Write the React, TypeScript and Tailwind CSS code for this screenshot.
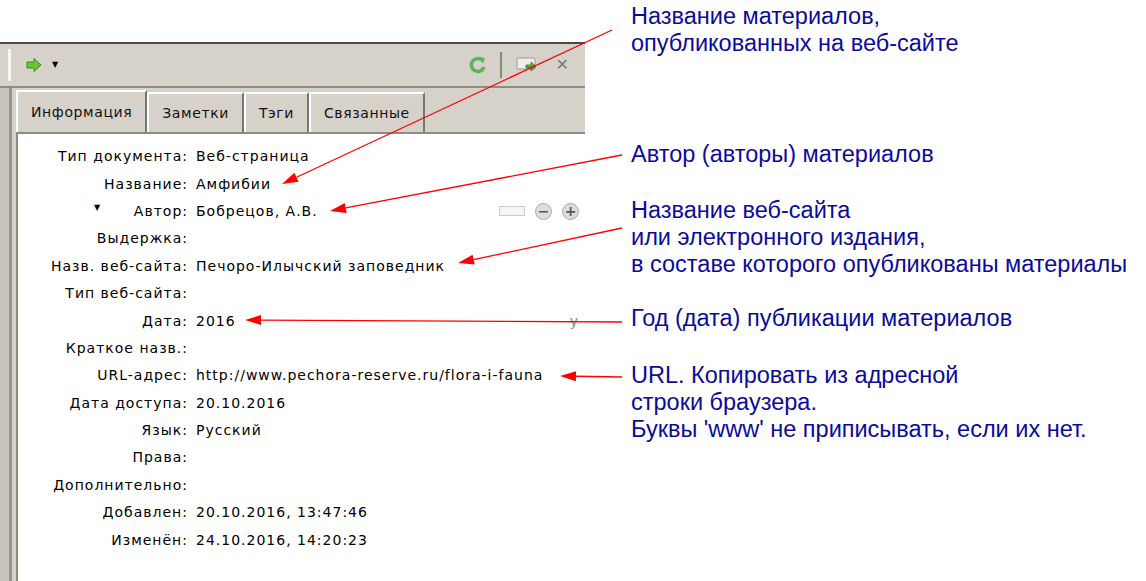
import React from "react";

const rows: [string, string][] = [
  ["Тип документа:", "Веб-страница"],
  ["Название:", "Амфибии"],
  ["Автор:", "Бобрецов, А.В."],
  ["Выдержка:", ""],
  ["Назв. веб-сайта:", "Печоро-Илычский заповедник"],
  ["Тип веб-сайта:", ""],
  ["Дата:", "2016"],
  ["Краткое назв.:", ""],
  ["URL-адрес:", "http://www.pechora-reserve.ru/flora-i-fauna"],
  ["Дата доступа:", "20.10.2016"],
  ["Язык:", "Русский"],
  ["Права:", ""],
  ["Дополнительно:", ""],
  ["Добавлен:", "20.10.2016, 13:47:46"],
  ["Изменён:", "24.10.2016, 14:20:23"],
];

const arrows = [
  [612, 30, 282, 184],
  [622, 155, 330, 211],
  [622, 228, 458, 263],
  [622, 322, 245, 320],
  [622, 377, 560, 376],
];

const Arrow = ({ a }: { a: number[] }) => {
  const [x1, y1, x2, y2] = a;
  const ang = Math.atan2(y2 - y1, x2 - x1);
  const L = 16, W = 5;
  const bx = x2 - L * Math.cos(ang), by = y2 - L * Math.sin(ang);
  const px = -Math.sin(ang) * W, py = Math.cos(ang) * W;
  return (
    <g>
      <line x1={x1} y1={y1} x2={bx} y2={by} stroke="#ff0000" strokeWidth="1.3" />
      <polygon points={`${x2},${y2} ${bx + px},${by + py} ${bx - px},${by - py}`} fill="#ff0000" />
    </g>
  );
};

export default function App() {
  return (
    <div className="relative w-[1146px] h-[581px] bg-white overflow-hidden" style={{ fontFamily: "'DejaVu Sans', sans-serif" }}>
      <div className="absolute left-0 top-[42px] w-[585px] h-[539px] border-t-2 border-[#4a4a4a] bg-[#d6d2ca] flex flex-col">
        {/* toolbar */}
        <div className="h-[44px] flex items-center border-b-2 border-[#8f8b85] px-[8px]">
          <div className="w-[3px] h-[32px] bg-white/80 mr-[15px]" />
          <svg width="16" height="14" viewBox="0 0 16 14">
            <path d="M1 4h7V0.5L15 7l-7 6.5V10H1z" fill="#6cc23a" stroke="#3f8a1e" strokeWidth="1" />
          </svg>
          <span className="ml-[10px] text-[8px] text-black">▼</span>
          <div className="flex-1" />
          <svg width="20" height="20" viewBox="0 0 20 20" className="mr-[12px]">
            <path d="M15 6a6.5 6.5 0 1 0 1 6" fill="none" stroke="#5fb25a" strokeWidth="3.5" />
            <path d="M11 2l6 1-2 6z" fill="#5fb25a" />
          </svg>
          <div className="w-[2px] h-[26px] bg-[#8a8680] mr-[14px]" />
          <svg width="24" height="20" viewBox="0 0 24 20" className="mr-[16px]">
            <rect x="1" y="3" width="18" height="11" rx="1" fill="#eee" stroke="#999" />
            <path d="M10 10h5V7l5 4.5-5 4.5v-3h-5z" fill="#4caf32" stroke="#2d7a1a" strokeWidth="0.7" />
          </svg>
          <span className="text-[#777] text-[16px] font-bold mr-[8px]">✕</span>
        </div>
        {/* body */}
        <div className="flex flex-1">
          <div className="w-[12px] border-r-[3px] border-[#9a968f] bg-[#c9c5be]" />
          <div className="flex-1 flex flex-col pl-[4px]">
            <div className="h-[44px] flex items-end text-[14px] text-[#111] tracking-[0.6px]">
              {["Информация", "Заметки", "Тэги", "Связанные"].map((t, i) => (
                <div
                  key={t}
                  className={`px-[13px] flex items-center border-t-2 border-l-2 border-white border-r-2 border-r-[#777] bg-[#d6d2ca] ${i === 0 ? "h-[42px]" : "h-[40px]"}`}
                >
                  {t}
                </div>
              ))}
            </div>
            <div className="flex-1 bg-white border-l-2 border-t-2 border-[#8f8b85] pt-[9px] text-[14px] text-black tracking-[1px]">
              {rows.map(([k, v], i) => (
                <div key={k} className="h-[27.4px] flex items-center">
                  <div className="w-[170px] text-right relative">
                    {i === 2 && <span className="absolute left-[76px] top-[1px] text-[8px]">▼</span>}
                    {k}
                  </div>
                  <div className="pl-[8px] flex-1 flex items-center whitespace-nowrap">
                    {v}
                    {i === 2 && (
                      <div className="ml-auto mr-[6px] flex items-center gap-[10px]">
                        <div className="w-[26px] h-[10px] border border-[#ccc] bg-[#f6f6f6]" />
                        <span className="w-[17px] h-[17px] rounded-full bg-[#ddd] border border-[#aaa] flex items-center justify-center text-[#555] text-[14px] leading-none font-bold tracking-normal">−</span>
                        <span className="w-[17px] h-[17px] rounded-full bg-[#ddd] border border-[#aaa] flex items-center justify-center text-[#555] text-[14px] leading-none font-bold tracking-normal">+</span>
                      </div>
                    )}
                    {i === 6 && <span className="ml-auto mr-[6px] text-[#888]">у</span>}
                  </div>
                </div>
              ))}
            </div>
          </div>
        </div>
      </div>

      <svg className="absolute inset-0 pointer-events-none" width="1146" height="581">
        {arrows.map((a, i) => <Arrow key={i} a={a} />)}
      </svg>

      <div className="absolute left-[631px] top-0 w-[515px] text-[#0b0b9a] text-[23.5px] leading-[27px]" style={{ fontFamily: "'Liberation Sans', Arial, sans-serif" }}>
        <div className="absolute top-[3px] whitespace-nowrap">Название материалов,<br />опубликованных на веб-сайте</div>
        <div className="absolute top-[141px] whitespace-nowrap">Автор (авторы) материалов</div>
        <div className="absolute top-[197px] whitespace-nowrap">Название веб-сайта<br />или электронного издания,<br />в составе которого опубликованы материалы</div>
        <div className="absolute top-[305px] whitespace-nowrap">Год (дата) публикации материалов</div>
        <div className="absolute top-[362px] whitespace-nowrap">URL. Копировать из адресной<br />строки браузера.<br />Буквы 'www' не приписывать, если их нет.</div>
      </div>
    </div>
  );
}
